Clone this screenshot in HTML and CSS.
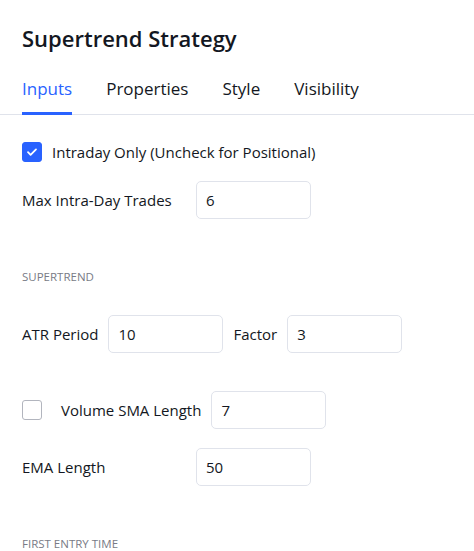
FILE: index.html
```html
<!DOCTYPE html>
<html lang="en">
<head>
    <meta charset="UTF-8">
    <title>Supertrend Strategy</title>
    <link rel="stylesheet" href="styles.css">
</head>
<body>
    <div class="dialog">
        <div class="dialog-title">Supertrend Strategy</div>
        <div class="tabs">
            <div class="tab active">Inputs</div>
            <div class="tab">Properties</div>
            <div class="tab">Style</div>
            <div class="tab">Visibility</div>
        </div>
        <div class="content">
            <div class="row row-intraday">
                <span class="checkbox checked">
                    <svg width="14" height="14" viewBox="0 0 14 14"><path d="M3 7.2l2.6 2.6L11 4.4" fill="none" stroke="#fff" stroke-width="1.8" stroke-linecap="round" stroke-linejoin="round"/></svg>
                </span>
                <span class="label">Intraday Only (Uncheck for Positional)</span>
            </div>
            <div class="row row-max">
                <span class="label wide">Max Intra-Day Trades</span>
                <input class="field" type="text" value="6">
            </div>
            <div class="section">SUPERTREND</div>
            <div class="row">
                <span class="label">ATR Period</span>
                <input class="field" type="text" value="10">
                <span class="label">Factor</span>
                <input class="field" type="text" value="3">
            </div>
            <div class="row row-vol">
                <span class="checkbox"></span>
                <span class="label vol-label">Volume SMA Length</span>
                <input class="field" type="text" value="7">
            </div>
            <div class="row row-ema">
                <span class="label wide">EMA Length</span>
                <input class="field" type="text" value="50">
            </div>
            <div class="section">FIRST ENTRY TIME</div>
        </div>
    </div>
</body>
</html>
```

FILE: styles.css
```css
body {
    margin: 0;
    height: 100vh;
    overflow: hidden;
    background-color: #FFFFFF;
    color: #131722;
    font-family: "Open Sans", sans-serif;
}
.dialog {
    display: flex;
    flex-direction: column;
}
.dialog-title {
    font-size: 22px;
    font-weight: 600;
    line-height: 28px;
    padding: 24px 22px 0 22px;
}
.tabs {
    display: flex;
    gap: 34px;
    padding: 0 22px;
    margin-top: 25px;
    border-bottom: 1px solid #E0E3EB;
}
.tab {
    font-size: 17px;
    line-height: 24px;
    padding-bottom: 11px;
    margin-bottom: -1px;
    border-bottom: 3px solid transparent;
}
.tab.active {
    color: #2962FF;
    border-bottom-color: #2962FF;
}
.content {
    display: flex;
    flex-direction: column;
    padding: 0 22px;
}
.row {
    display: flex;
    align-items: center;
    gap: 10px;
    height: 38px;
    font-size: 15px;
}
.row-intraday {
    margin-top: 18px;
}
.row-max {
    margin-top: 10px;
}
.row-vol {
    margin-top: 38px;
}
.row-ema {
    margin-top: 19px;
}
.checkbox {
    box-sizing: border-box;
    width: 20px;
    height: 20px;
    border: 1px solid #B2B5BE;
    border-radius: 3px;
    display: flex;
    align-items: center;
    justify-content: center;
}
.checkbox.checked {
    background-color: #2962FF;
    border-color: #2962FF;
}
.label.wide {
    width: 164px;
}
.vol-label {
    margin-left: 9px;
}
.field {
    box-sizing: border-box;
    width: 115px;
    height: 38px;
    border: 1px solid #E0E3EB;
    border-radius: 5px;
    padding: 0 9px;
    font-family: inherit;
    font-size: 15px;
    color: #131722;
    outline: none;
}
.section {
    font-size: 11.5px;
    line-height: 16px;
    color: #787B86;
    text-transform: uppercase;
    margin-top: 50px;
    margin-bottom: 30px;
}
```
